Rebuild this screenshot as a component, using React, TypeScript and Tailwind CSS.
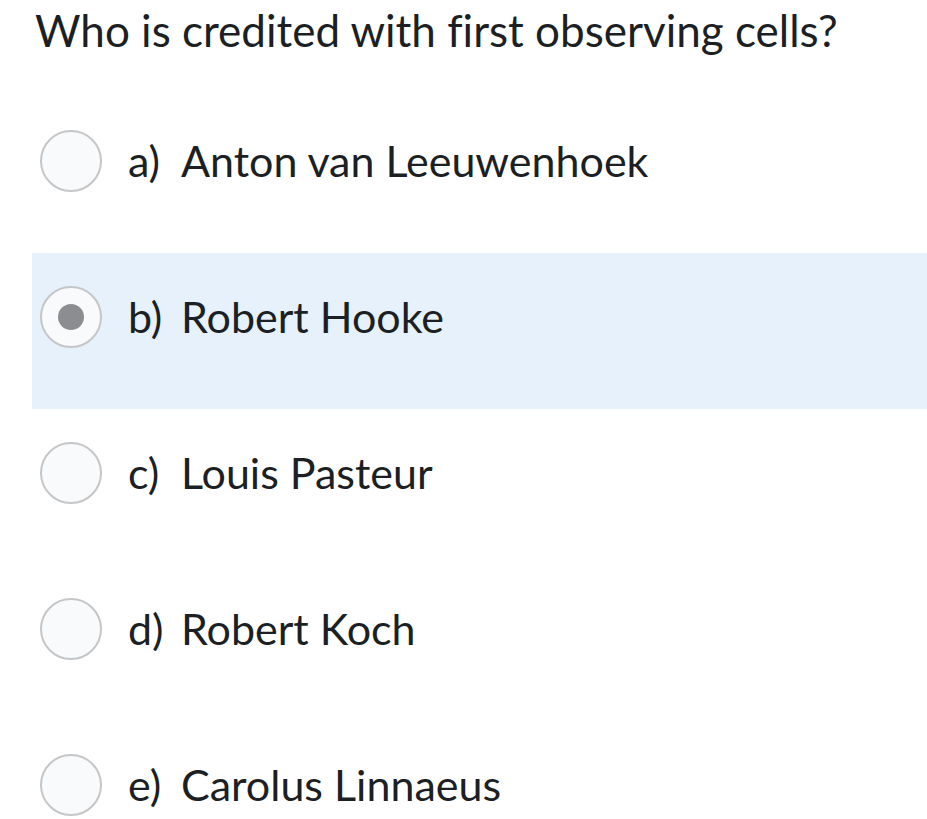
import React from "react";

const options = [
  { letter: "a)", text: "Anton van Leeuwenhoek", selected: false },
  { letter: "b)", text: "Robert Hooke", selected: true },
  { letter: "c)", text: "Louis Pasteur", selected: false },
  { letter: "d)", text: "Robert Koch", selected: false },
  { letter: "e)", text: "Carolus Linnaeus", selected: false },
];

export default function App() {
  return (
    <div className="w-[927px] h-[819px] bg-white overflow-hidden text-[#1c1f24] [font-variant-ligatures:none]" style={{ fontFamily: "Lato, 'Noto Sans', sans-serif" }}>
      <div className="h-[97px] pl-[35px] pt-[2px]">
        <h1 className="text-[44px] leading-[56px] font-normal">Who is credited with first observing cells?</h1>
      </div>
      <div className="ml-[32px]">
        {options.map((o) => (
          <div key={o.letter} className={`h-[156px] flex items-start pt-[33px] pl-[8px] ${o.selected ? "bg-[#e6f1fb]" : ""}`}>
            <div className="w-[62px] h-[62px] rounded-full border-2 border-[#c4c6c8] bg-[#f9fafb] flex items-center justify-center shrink-0">
              {o.selected && <div className="w-[26px] h-[26px] rounded-full bg-[#8b8d91]" />}
            </div>
            <div className="ml-[26px] flex text-[43px] leading-[62px]">
              <span className="w-[53px]">{o.letter}</span>
              <span>{o.text}</span>
            </div>
          </div>
        ))}
      </div>
    </div>
  );
}
